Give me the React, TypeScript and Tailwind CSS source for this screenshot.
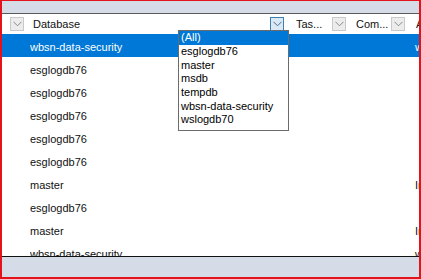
import * as React from "react";

/** Grid rows shown under the filter header. `extra` is the clipped text of the far-right column. */
const ROWS: { db: string; extra?: string; selected?: boolean }[] = [
  { db: "wbsn-data-security", extra: "w", selected: true },
  { db: "esglogdb76" },
  { db: "esglogdb76" },
  { db: "esglogdb76" },
  { db: "esglogdb76" },
  { db: "esglogdb76" },
  { db: "master", extra: "Ir" },
  { db: "esglogdb76" },
  { db: "master", extra: "Ir" },
  { db: "wbsn-data-security", extra: "w" },
];

const OPTIONS = ["(All)", "esglogdb76", "master", "msdb", "tempdb", "wbsn-data-security", "wslogdb70"];

function FilterButton({ hot = false }: { hot?: boolean }) {
  return (
    <span
      className={`flex h-[14px] w-[14px] shrink-0 items-center justify-center border ${
        hot ? "border-[#3c7fb1] bg-[#dbe9f6]" : "border-[#c9c9c9] bg-[#ececec]"
      }`}
    >
      <svg width="9" height="6" viewBox="0 0 9 6" fill="none">
        <path d="M0.5 0.8 L4.5 4.8 L8.5 0.8" stroke={hot ? "#4a6a8a" : "#8a8a8a"} strokeWidth="1" />
      </svg>
    </span>
  );
}

export default function App() {
  return (
    <div
      className="relative flex h-[279px] w-[421px] flex-col overflow-hidden border-t border-b-2 border-l-2 border-r-2 border-[#e4121a] bg-white text-[11px] text-[#111]"
      style={{ fontFamily: '"Liberation Sans", Arial, sans-serif' }}
    >
      {/* top gray band */}
      <div className="h-[12px] shrink-0 bg-[#d5dbe7]" />
      <div className="h-px shrink-0 bg-[#5a5a5a]" />

      {/* header */}
      <div className="flex h-[20px] shrink-0 items-center overflow-hidden bg-white">
        <div className="flex w-[26px] shrink-0 justify-end pr-[4px]">
          <FilterButton />
        </div>
        <div className="flex w-[260px] shrink-0 items-center justify-between pl-[5px] pr-[4px]">
          <span>Database</span>
          <FilterButton hot />
        </div>
        <div className="flex w-[61px] shrink-0 items-center justify-between pl-[8px] pr-[3px]">
          <span>Tas...</span>
          <FilterButton />
        </div>
        <div className="flex w-[60px] shrink-0 items-center justify-between pl-[7px] pr-[4px]">
          <span>Com...</span>
          <FilterButton />
        </div>
        <div className="shrink-0 pl-[7px]">A</div>
      </div>

      {/* rows */}
      <div className="flex min-h-0 flex-1 flex-col overflow-hidden">
        {ROWS.map((r, i) => (
          <div
            key={i}
            className={`flex h-[23px] shrink-0 items-center pt-[4px] ${r.selected ? "bg-[#0078d7] text-white" : ""}`}
          >
            <div className="w-[28px] shrink-0" />
            <div className="w-[385px] shrink-0 overflow-hidden whitespace-nowrap">{r.db}</div>
            <div className="whitespace-nowrap">{r.extra}</div>
          </div>
        ))}
      </div>

      {/* bottom band */}
      <div className="h-px shrink-0 bg-[#111]" />
      <div className="h-[20px] shrink-0 bg-[#d5dbe7]" />

      {/* open filter dropdown */}
      <div className="absolute left-[176px] top-[29px] w-[111px] border border-[#6b6b6b] bg-white pb-[3px]">
        {OPTIONS.map((o, i) => (
          <div
            key={o}
            className={`flex h-[13.67px] items-center pl-[2px] leading-none ${
              i === 0 ? "bg-[#0078d7] text-white" : "text-black"
            }`}
          >
            {o}
          </div>
        ))}
      </div>
    </div>
  );
}
